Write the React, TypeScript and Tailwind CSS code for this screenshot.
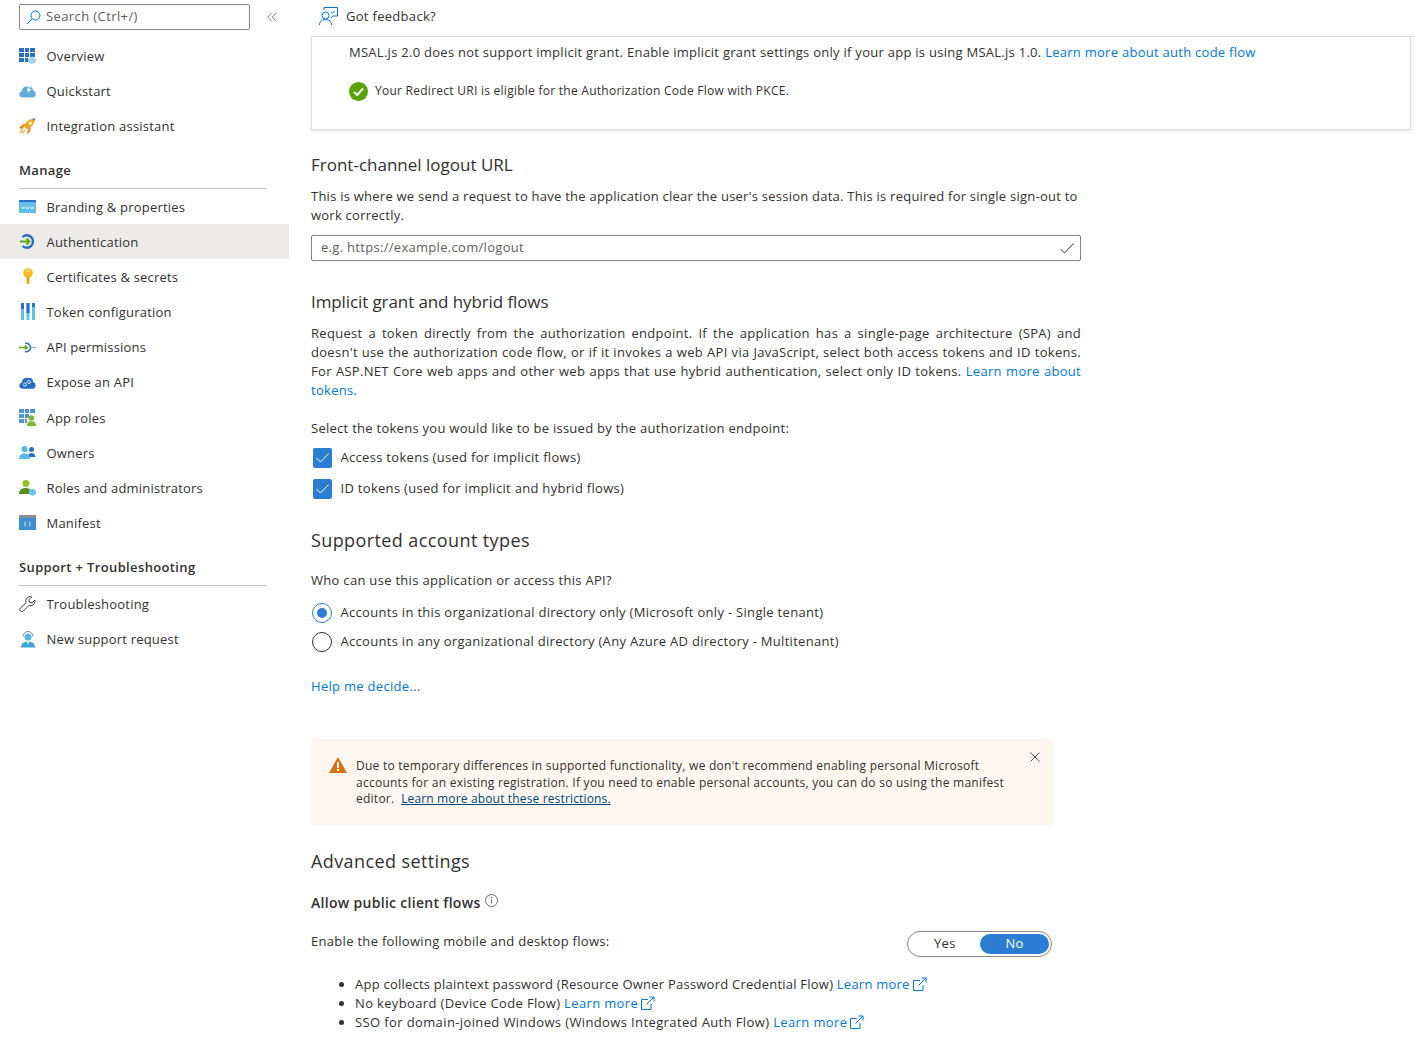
import { ReactNode } from "react";

const LINK = "text-[#0078d4]";

function Overview() {
  return (
    <svg width="17" height="17" viewBox="0 0 17 17">
      <path d="M0 1h5v4H0zM6 1h4v4H6zM11 1h5v4h-5zM0 6h5v4H0zM6 6h4v4H6zM11 6h5v4h-5zM0 11h5v4H0zM6 11h3v4H6z" fill="#2a6fc4" />
      <path d="M9 12l4-2.500 4 2.500v3.500l-4 1.500-4-1.500z" fill="#9fd4ec" />
    </svg>
  );
}
function Quickstart() {
  return (
    <svg width="17" height="14" viewBox="0 0 17 14">
      <path d="M3.500 13.500a3.200 3.200 0 0 1-.8-6.300A4.800 4.800 0 0 1 9 2.800a3.800 3.800 0 0 1 5 3.800 3.500 3.500 0 0 1-.8 6.900z" fill="#62add8" />
      <path d="M11 1L7.500 6.500h2.200L8.500 10l4-5h-2.300z" fill="#fff" />
    </svg>
  );
}
function Rocket() {
  return (
    <svg width="18" height="18" viewBox="0 0 18 18">
      <path d="M4.500 8.500C7.500 4 12 1.500 17 .5c-.5 5.200-3 9.500-8 12.500z" fill="#f6a623" />
      <path d="M5.500 7L1 9.500 .5 12l4.500-1.500zM10.500 12L8 17l2.500-.5 2.500-5z" fill="#e3830f" />
      <path d="M5.500 10.500L.5 17.500l2-5.500zM7.500 12.500L.5 17.500l5-1.800z" fill="#ee9a1a" />
      <circle cx="12" cy="6" r="1.800" fill="#fff3c4" />
      <path d="M14 1.300L17 .5l-.5 3z" fill="#3e8fd0" />
    </svg>
  );
}
function Branding() {
  return (
    <svg width="17" height="13" viewBox="0 0 17 13">
      <rect x="0" y="0" width="17" height="13" fill="#62bde8" />
      <rect x="0" y="0" width="17" height="2" fill="#2a6fc4" />
      <path d="M2.500 6.500l.8 2.500.8-2 .8 2 .8-2.500M7 6.500l.8 2.500.8-2 .8 2 .8-2.500M11.500 6.500l.8 2.500.8-2 .8 2 .8-2.500" fill="none" stroke="#d8f1fb" strokeWidth=".7" />
    </svg>
  );
}
function AuthIcon() {
  return (
    <svg width="17" height="17" viewBox="0 0 17 17" fill="none">
      <path d="M3.500 4A6.200 6.200 0 1 1 3.500 13" stroke="#2a6fc4" strokeWidth="2.400" />
      <path d="M1 8.500h9M7.500 5.500l3 3-3 3" stroke="#5ea70f" strokeWidth="1.900" />
    </svg>
  );
}
function KeyIcon() {
  return (
    <svg width="12" height="17" viewBox="0 0 12 17">
      <circle cx="6" cy="5" r="4.800" fill="#fbbc1d" />
      <path d="M4.500 8h3v7L6 16.500 4.500 15z" fill="#eea70e" />
      <rect x="4" y="2" width="4" height="1.500" fill="#ffe493" />
    </svg>
  );
}
function TokenIcon() {
  return (
    <svg width="16" height="17" viewBox="0 0 16 17">
      <rect x="1" y="0" width="3" height="17" fill="#5fc0ec" />
      <rect x="1" y="0" width="3" height="6" fill="#2a6fc4" />
      <rect x="6.500" y="0" width="3" height="17" fill="#5fc0ec" />
      <rect x="6.500" y="0" width="3" height="10" fill="#2a6fc4" />
      <rect x="12" y="0" width="3" height="17" fill="#5fc0ec" />
      <rect x="12" y="0" width="3" height="4" fill="#2a6fc4" />
    </svg>
  );
}
function ApiPerm() {
  return (
    <svg width="17" height="11" viewBox="0 0 17 11" fill="none">
      <path d="M6 1.500a4.200 4.200 0 1 1 0 8" stroke="#2a6fc4" strokeWidth="1.500" />
      <path d="M12 5.500h5" stroke="#7fb2dc" strokeWidth="1.300" />
      <path d="M0 5.500h8M6 3.500l2.200 2-2.200 2" stroke="#5ea70f" strokeWidth="1.500" />
    </svg>
  );
}
function ExposeApi() {
  return (
    <svg width="17" height="13" viewBox="0 0 17 13">
      <path d="M3.500 12.800a3.200 3.200 0 0 1-.8-6.300A4.800 4.800 0 0 1 9 2a3.800 3.800 0 0 1 5 3.900 3.500 3.500 0 0 1-.8 6.900z" fill="#2a6fc4" />
      <circle cx="6" cy="8.500" r="1.500" fill="none" stroke="#cfe6f7" strokeWidth="1" />
      <circle cx="10" cy="6" r="1.500" fill="none" stroke="#cfe6f7" strokeWidth="1" />
    </svg>
  );
}
function AppRoles() {
  return (
    <svg width="17" height="17" viewBox="0 0 17 17">
      <path d="M0 0h5v4H0zM6 0h4v4H6zM11 0h5v4h-5zM0 5h5v4H0zM6 5h4v4H6zM0 10h5v4H0zM6 10h2v4H6z" fill="#4f93d8" />
      <circle cx="12.500" cy="9" r="2.700" fill="#7db82e" />
      <path d="M8 17c0-3.500 2-4.800 4.500-4.800S17 13.500 17 17z" fill="#7db82e" />
    </svg>
  );
}
function Owners() {
  return (
    <svg width="17" height="13" viewBox="0 0 17 13">
      <circle cx="12.500" cy="3.500" r="2.500" fill="#2a6fc4" />
      <path d="M9 11c0-2.500 1.500-4 3.500-4s4 1.500 4 4z" fill="#2a6fc4" />
      <circle cx="5.500" cy="3" r="3" fill="#55b7e4" />
      <path d="M0 13c0-3.800 2.500-5.500 5.500-5.500S11 9.200 11 13z" fill="#55b7e4" />
    </svg>
  );
}
function RolesIcon() {
  return (
    <svg width="17" height="16" viewBox="0 0 17 16">
      <circle cx="7" cy="3.500" r="3.500" fill="#96c11f" />
      <path d="M0 14c0-4 2.500-6 6.500-6S13 10 13 14z" fill="#5e8a1c" />
      <path d="M10 10.500l3.500-2 3.500 2v3.500l-3.500 2-3.500-2z" fill="#6cc7ec" />
    </svg>
  );
}
function Manifest() {
  return (
    <svg width="17" height="15" viewBox="0 0 17 15">
      <rect x="0" y="0" width="17" height="15" fill="#3f8fd0" />
      <rect x="0" y="0" width="17" height="3" fill="#8a8f94" />
      <path d="M7 6.500c-1 0-.8 1-.8 1.700 0 .6-.4.8-.8.800.4 0 .8.200.8.800 0 .7-.2 1.700.8 1.700M10 6.500c1 0 .8 1 .8 1.700 0 .6.400.8.800.800-.4 0-.8.200-.8.800 0 .7.200 1.700-.8 1.700" stroke="#fff" strokeWidth=".7" fill="none" />
    </svg>
  );
}
function Wrench() {
  return (
    <svg width="18" height="18" viewBox="0 0 18 18" fill="none">
      <path d="M12 1a5 5 0 0 0-4.600 6.600L1.500 13.500a2.100 2.100 0 0 0 3 3l5.900-5.900A5 5 0 0 0 17 6l-.2-1.200-3 3-2.600-.7-.7-2.600 3-3z" stroke="#323130" strokeWidth="1" strokeLinejoin="round" />
    </svg>
  );
}
function Support() {
  return (
    <svg width="16" height="17" viewBox="0 0 16 17">
      <path d="M3 5.500a5 5 0 0 1 10 0" fill="none" stroke="#7a8288" strokeWidth="1" />
      <circle cx="8" cy="6" r="3.500" fill="#55b7e4" />
      <path d="M1 16.500c0-4 2.500-6 7-6s7 2 7 6z" fill="#3ea6d8" />
      <path d="M6.500 10.500L8 13l1.500-2.500z" fill="#fff" />
    </svg>
  );
}

function External() {
  return (
    <svg width="15" height="15" viewBox="0 0 15 15" fill="none" className="ml-[2px] inline-block align-[-3px]" stroke="#0078d4" strokeWidth="1">
      <path d="M8 3.500H1.500v10h9.500V8M6.500 8.500L14 1M9.500 1H14v4.500" />
    </svg>
  );
}

function NavItem({ icon, label, active }: { icon: ReactNode; label: string; active?: boolean }) {
  return (
    <div className={`flex h-[35.15px] items-center pl-[19px] ${active ? "bg-[#edebe9]" : ""}`}>
      <span className="flex w-[17px] shrink-0 items-center justify-center">{icon}</span>
      <span className="ml-[10.500px] pt-[2px] text-[#323130]">{label}</span>
    </div>
  );
}

function NavHeading({ children }: { children: ReactNode }) {
  return (
    <div className="mx-[19px] flex h-[29px] w-[248px] items-start border-b border-[#c8c6c4] pt-[1px] font-semibold tracking-[0.36px] text-[#323130]">
      {children}
    </div>
  );
}

function Sidebar() {
  return (
    <aside className="w-[289px] shrink-0 tracking-[0.2px]">
      <div className="flex h-[33px] items-start pt-[4px]">
        <div className="ml-[19px] flex h-[26px] w-[231px] items-center rounded-[2px] border border-[#8a8886] pl-[6px] tracking-[0.4px] text-[#605e5c]">
          <svg width="15" height="15" viewBox="0 0 15 15" fill="none" stroke="#0078d4" strokeWidth="1">
            <circle cx="9.500" cy="5.500" r="4.500" />
            <path d="M6 9L1 14" />
          </svg>
          <span className="ml-[5px]">Search (Ctrl+/)</span>
        </div>
        <svg className="ml-[17px] mt-[8px]" width="10" height="10" viewBox="0 0 10 10" fill="none" stroke="#8a8886" strokeWidth="1">
          <path d="M5 .5L.8 5 5 9.500M9.500.5L5.300 5l4.200 4.500" />
        </svg>
      </div>
      <div className="pt-[5px]">
        <NavItem icon={<Overview />} label="Overview" />
        <NavItem icon={<Quickstart />} label="Quickstart" />
        <NavItem icon={<Rocket />} label="Integration assistant" />
      </div>
      <div className="mt-[16.500px]">
        <NavHeading>Manage</NavHeading>
        <NavItem icon={<Branding />} label="Branding & properties" />
        <NavItem icon={<AuthIcon />} label="Authentication" active />
        <NavItem icon={<KeyIcon />} label="Certificates & secrets" />
        <NavItem icon={<TokenIcon />} label="Token configuration" />
        <NavItem icon={<ApiPerm />} label="API permissions" />
        <NavItem icon={<ExposeApi />} label="Expose an API" />
        <NavItem icon={<AppRoles />} label="App roles" />
        <NavItem icon={<Owners />} label="Owners" />
        <NavItem icon={<RolesIcon />} label="Roles and administrators" />
        <NavItem icon={<Manifest />} label="Manifest" />
      </div>
      <div className="mt-[17px]">
        <NavHeading>Support + Troubleshooting</NavHeading>
        <NavItem icon={<Wrench />} label="Troubleshooting" />
        <NavItem icon={<Support />} label="New support request" />
      </div>
    </aside>
  );
}

function H2({ children, className = "" }: { children: ReactNode; className?: string }) {
  return <h2 className={`leading-[24px] text-[#323130] ${className}`}>{children}</h2>;
}

function Check({ label, className = "" }: { label: string; className?: string }) {
  return (
    <div className={`flex h-[20px] items-center ${className}`}>
      <span className="ml-[2px] flex h-[20px] w-[19px] items-center justify-center rounded-[2px] bg-[#2b7cd3]">
        <svg width="13" height="10" viewBox="0 0 13 10" fill="none" stroke="#fff" strokeWidth="1">
          <path d="M.5 5l4 4 8-8.500" />
        </svg>
      </span>
      <span className="ml-[8.500px]">{label}</span>
    </div>
  );
}

function Radio({ label, checked, className = "" }: { label: string; checked?: boolean; className?: string }) {
  return (
    <div className={`flex h-[20px] items-center ${className}`}>
      <span className={`ml-[1px] flex h-[20px] w-[20px] items-center justify-center rounded-full border ${checked ? "border-[#2b7cd3]" : "border-[#323130]"}`}>
        {checked && <span className="h-[10px] w-[10px] rounded-full bg-[#2b7cd3]" />}
      </span>
      <span className="ml-[8.500px]">{label}</span>
    </div>
  );
}

function Main() {
  return (
    <main className="min-w-0 flex-1 pl-[22px] tracking-[0.3px]">
      <div className="flex h-[33px] items-center pl-[8px]">
        <svg width="19" height="19" viewBox="0 0 19 19" fill="none" stroke="#0078d4" strokeWidth="1">
          <circle cx="6.500" cy="8.500" r="3.500" />
          <path d="M.5 18c0-3.500 2.500-5.500 6-5.500s6 2 6 5.500" />
          <path d="M5 3V.5h13.500V9H14l-2 2" />
          <path d="M12 5l1.300 1.300L15.500 4" />
        </svg>
        <span className="ml-[8px] text-[#323130]">Got feedback?</span>
      </div>
      <div className="h-[3px]" />
      <div className="relative">
        <div className="absolute right-0 top-0 h-px w-full bg-[#d9d9d9]" />
      </div>
      <section className="mr-[3px] h-[94px] border border-[#e1e1e1] pl-[37px] shadow-[0_1px_3px_rgba(0,0,0,0.12)]">
        <p className="mt-[6px] leading-[19px] tracking-[0.27px]">
          MSAL.js 2.0 does not support implicit grant. Enable implicit grant settings only if your app is using MSAL.js 1.0.{" "}
          <span className={LINK}>Learn more about auth code flow</span>
        </p>
        <div className="mt-[19px] flex h-[20px] items-center">
          <svg width="19" height="19" viewBox="0 0 19 19">
            <circle cx="9.500" cy="9.500" r="9.500" fill="#57a300" />
            <path d="M5 10l3.200 3L14 6.500" fill="none" stroke="#fff" strokeWidth="2" />
          </svg>
          <span className="ml-[7px] text-[12px] tracking-[0.26px]">Your Redirect URI is eligible for the Authorization Code Flow with PKCE.</span>
        </div>
      </section>

      <div className="w-[770px]">
        <H2 className="mt-[23px] text-[17px] tracking-normal">Front-channel logout URL</H2>
        <p className="mt-[10px] leading-[19px] tracking-[0.24px]">
          This is where we send a request to have the application clear the user's session data. This is required for single sign-out to work correctly.
        </p>
        <div className="mt-[10px] flex h-[26px] items-center justify-between rounded-[2px] border border-[#8a8886] pl-[9px] pr-[6px] text-[#605e5c]">
          <span>e.g. https://example.com/logout</span>
          <svg width="14" height="11" viewBox="0 0 14 11" fill="none" stroke="#323130" strokeWidth="1">
            <path d="M.5 6l4 4L13.500.5" />
          </svg>
        </div>

        <H2 className="mt-[29px] text-[17px] tracking-[-0.1px]">Implicit grant and hybrid flows</H2>
        <p className="mt-[10px] text-justify leading-[19px]">
          Request a token directly from the authorization endpoint. If the application has a single-page architecture (SPA) and doesn't use the authorization code flow, or if it invokes a web API via JavaScript, select both access tokens and ID tokens. For ASP.NET Core web apps and other web apps that use hybrid authentication, select only ID tokens.{" "}
          <span className={LINK}>Learn more about tokens.</span>
        </p>
        <p className="mt-[19px] leading-[19px] tracking-[0.27px]">Select the tokens you would like to be issued by the authorization endpoint:</p>
        <Check className="mt-[10px]" label="Access tokens (used for implicit flows)" />
        <Check className="mt-[11px]" label="ID tokens (used for implicit and hybrid flows)" />

        <H2 className="mt-[29px] text-[18px] tracking-[0.4px]">Supported account types</H2>
        <p className="mt-[19px] leading-[19px]">Who can use this application or access this API?</p>
        <Radio className="mt-[13px]" checked label="Accounts in this organizational directory only (Microsoft only - Single tenant)" />
        <Radio className="mt-[9px]" label="Accounts in any organizational directory (Any Azure AD directory - Multitenant)" />
        <p className={`mt-[25px] leading-[19px] ${LINK}`}>Help me decide...</p>
      </div>

      <div className="relative mt-[43px] flex h-[86px] w-[742px] rounded-[2px] bg-[#fef7f1] pl-[18px] pt-[19px] tracking-[0.25px]">
        <svg className="-mt-[1px] shrink-0" width="18" height="16" viewBox="0 0 18 16">
          <path d="M9 0l9 16H0z" fill="#d9730d" />
          <rect x="8" y="5" width="2" height="6" fill="#fff" />
          <rect x="8" y="12" width="2" height="2" fill="#fff" />
        </svg>
        <p className="ml-[9px] w-[660px] text-[12px] leading-[16.500px]">
          Due to temporary differences in supported functionality, we don't recommend enabling personal Microsoft accounts for an existing registration. If you need to enable personal accounts, you can do so using the manifest editor.&nbsp;{" "}
          <span className="tracking-[0.15px] text-[#004578] underline">Learn more about these restrictions.</span>
        </p>
        <svg className="absolute right-[13px] top-[13px]" width="10" height="10" viewBox="0 0 10 10" stroke="#605e5c" strokeWidth="1">
          <path d="M.5.5l9 9M9.500.5l-9 9" />
        </svg>
      </div>

      <H2 className="mt-[24px] text-[18px] tracking-[0.4px]">Advanced settings</H2>
      <div className="mt-[19px] flex h-[20px] w-[742px] items-center text-[14px] font-semibold">
        Allow public client flows
        <svg className="mb-[4px] ml-[4px]" width="13" height="13" viewBox="0 0 13 13" fill="none" stroke="#605e5c" strokeWidth=".9">
          <circle cx="6.500" cy="6.500" r="6" />
          <path d="M6.500 5.500v4M6.500 3v1.200" />
        </svg>
      </div>
      <div className="mt-[19px] flex w-[742px] items-start justify-between">
        <span className="leading-[20px]">Enable the following mobile and desktop flows:</span>
        <div className="mr-[1px] flex h-[26px] w-[145px] items-center justify-between rounded-full border border-[#8a8886] p-[2px] pl-[26px]">
          <span className="text-[#323130]">Yes</span>
          <span className="flex h-[20px] w-[69px] items-center justify-center rounded-full bg-[#2b7cd3] text-white">No</span>
        </div>
      </div>
      <ul className="mt-[18px] list-disc pl-[44px] leading-[19px] marker:text-[#323130]">
        <li className="tracking-[0.23px]">
          App collects plaintext password (Resource Owner Password Credential Flow) <span className={LINK}>Learn more</span>
          <External />
        </li>
        <li className="tracking-[0.35px]">
          No keyboard (Device Code Flow) <span className={LINK}>Learn more</span>
          <External />
        </li>
        <li className="tracking-[0.38px]">
          SSO for domain-joined Windows (Windows Integrated Auth Flow) <span className={LINK}>Learn more</span>
          <External />
        </li>
      </ul>
    </main>
  );
}

export default function App() {
  return (
    <div className="flex min-h-screen bg-white font-['Open_Sans','Noto_Sans',sans-serif] text-[13px] text-[#323130]">
      <Sidebar />
      <Main />
    </div>
  );
}
